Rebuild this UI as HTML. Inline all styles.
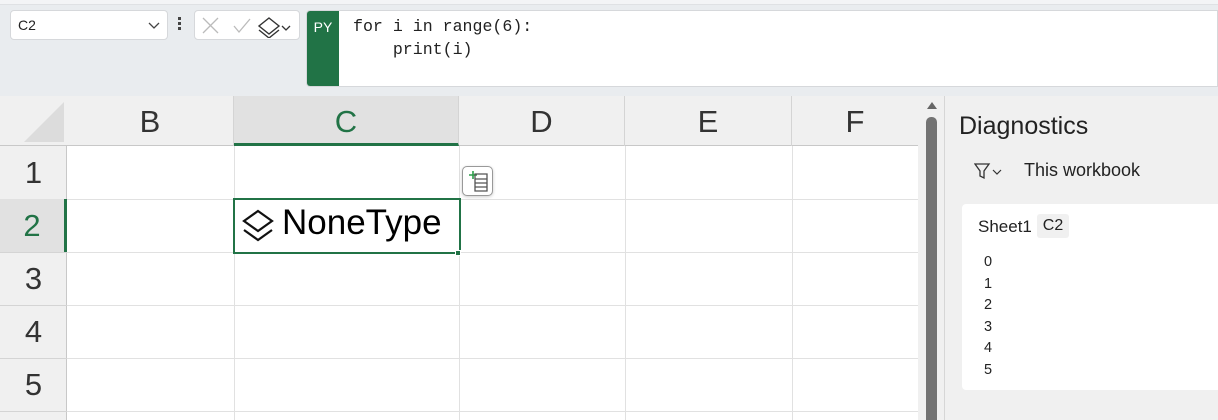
<!DOCTYPE html><html><head><style>
*{box-sizing:border-box;margin:0;padding:0}
body{width:1218px;height:420px;overflow:hidden;background:#e9ecef;font-family:"Liberation Sans",sans-serif;position:relative}
.a{position:absolute}
.hl{position:absolute;left:0;width:918px;height:1px;background:#e1e1e1}
.vl{position:absolute;top:146px;height:274px;width:1px;background:#e1e1e1}
.ch{position:absolute;top:96px;height:50px;font-size:31px;color:#333;text-align:center;line-height:52px;border-right:1px solid #d4d4d4}
.rh{position:absolute;left:0;width:67px;font-size:31px;color:#333;text-align:center;line-height:53px;height:53px}
</style></head><body>
<div class="a" style="left:0;top:0;width:1218px;height:5px;background:#f3f4f6;border-bottom:1px solid #dfe1e4"></div>
<div class="a" style="left:10px;top:10px;width:158px;height:30px;background:#fff;border:1px solid #d6d8db;border-radius:4px;font-size:14px;line-height:28px;padding-left:7px;color:#222">C2
<svg class="a" style="left:137px;top:11px" width="12" height="8"><path d="M1 1l5 5 5-5" stroke="#444" fill="none" stroke-width="1.3"/></svg></div>
<div class="a" style="left:178px;top:17px;width:3px;height:3px;background:#444;box-shadow:0 5px #444,0 10px #444"></div>
<div class="a" style="left:194px;top:10px;width:106px;height:30px;background:#fff;border:1px solid #d6d8db;border-radius:4px">
<svg class="a" style="left:6px;top:5px" width="100" height="22"><path d="M2 2l15 15M17 2L2 17" stroke="#bbb" fill="none" stroke-width="1.3"/><path d="M33 10l5 6 11-13" stroke="#bbb" fill="none" stroke-width="1.3"/><path d="M68 2l10 8-10 8-10-8z" stroke="#333" fill="none" stroke-width="1.4"/><path d="M58 14l10 8 10-8" stroke="#333" fill="none" stroke-width="1.4"/><path d="M81 10l4 4 4-4" stroke="#333" fill="none" stroke-width="1.3"/></svg></div>
<div class="a" style="left:306px;top:10px;width:912px;height:77px;background:#fff;border:1px solid #d6d8db;border-radius:4px 0 0 4px;overflow:hidden">
<div class="a" style="left:0;top:0;width:32px;height:77px;background:#217346;color:#fff;font-size:14px;text-align:center;line-height:32px">PY</div>
<pre class="a" style="left:46px;top:4px;font-family:'Liberation Mono',monospace;font-size:16.6px;line-height:23px;color:#222">for i in range(6):
    print(i)</pre></div>
<div class="a" style="left:0;top:96px;width:918px;height:324px;background:#fff"></div>
<div class="a" style="left:0;top:96px;width:918px;height:50px;background:#f0f0f0;border-bottom:1px solid #c8c8c8"></div>
<div class="a" style="left:0;top:146px;width:67px;height:274px;background:#f0f0f0;border-right:1px solid #c8c8c8"></div>
<svg class="a" style="left:20px;top:100px" width="46" height="44"><path d="M44 2V42H4z" fill="#dcdcdc"/></svg>
<div class="ch" style="left:67px;width:167px">B</div>
<div class="ch" style="left:234px;width:225px;background:#e1e1e1;color:#217346;border-bottom:3px solid #217346;height:50px">C</div>
<div class="ch" style="left:459px;width:166px">D</div>
<div class="ch" style="left:625px;width:167px">E</div>
<div class="ch" style="left:792px;width:126px;border:none">F</div>
<div class="hl" style="top:199px;left:67px;width:851px"></div><div class="hl" style="top:252px;left:67px;width:851px"></div><div class="hl" style="top:305px;left:67px;width:851px"></div><div class="hl" style="top:358px;left:67px;width:851px"></div><div class="hl" style="top:411px;left:67px;width:851px"></div>
<div class="hl" style="top:199px;width:67px;background:#d4d4d4"></div><div class="hl" style="top:252px;width:67px;background:#d4d4d4"></div><div class="hl" style="top:305px;width:67px;background:#d4d4d4"></div><div class="hl" style="top:358px;width:67px;background:#d4d4d4"></div><div class="hl" style="top:411px;width:67px;background:#d4d4d4"></div>
<div class="vl" style="left:234px"></div><div class="vl" style="left:459px"></div><div class="vl" style="left:625px"></div><div class="vl" style="left:792px"></div>
<div class="rh" style="top:146px">1</div>
<div class="rh" style="top:199px;background:#e1e1e1;color:#217346;border-right:3px solid #217346">2</div>
<div class="rh" style="top:252px">3</div><div class="rh" style="top:305px">4</div><div class="rh" style="top:358px">5</div>
<div class="a" style="left:233px;top:198px;width:228px;height:56px;border:2px solid #217346"></div>
<div class="a" style="left:455px;top:250px;width:6px;height:6px;background:#217346;border:1px solid #fff"></div>
<svg class="a" style="left:242px;top:209px" width="34" height="34"><path d="M16 2l14 10-14 10L2 12z" stroke="#111" fill="none" stroke-width="2.2"/><path d="M2 21l14 10 14-10" stroke="#111" fill="none" stroke-width="2.2"/></svg>
<div class="a" style="left:282px;top:203px;font-size:35px;color:#000;font-family:'Liberation Sans','DejaVu Sans',sans-serif">NoneType</div>
<div class="a" style="left:462px;top:166px;width:31px;height:30px;background:#fff;border:1px solid #999;border-radius:5px;box-shadow:0 1px 3px rgba(0,0,0,.2)">
<svg class="a" style="left:5px;top:3px" width="22" height="22"><path d="M1 5h8M5 1v8" stroke="#2e9e4b" stroke-width="1.6"/><path d="M7 4h12v17H7zM7 9h12M7 13h12M7 17h12" stroke="#555" fill="none" stroke-width="1.3"/></svg></div>
<div class="a" style="left:918px;top:96px;width:27px;height:324px;background:#f0f0f0;border-right:1px solid #d6d6d6"></div>
<svg class="a" style="left:926px;top:100px" width="12" height="10"><path d="M1 9l5-7 5 7z" fill="#666"/></svg>
<div class="a" style="left:926px;top:117px;width:11px;height:303px;background:#737373;border-radius:5px 5px 0 0"></div>
<div class="a" style="left:945px;top:96px;width:273px;height:324px;background:#f0f0f0"></div>
<div class="a" style="left:959px;top:112px;font-size:25px;color:#222;font-family:'Liberation Sans','DejaVu Sans',sans-serif">Diagnostics</div>
<svg class="a" style="left:974px;top:162px" width="30" height="18"><path d="M1 2h14l-5 7v7l-4-2v-5z" stroke="#333" fill="none" stroke-width="1.3"/><path d="M19 8l4 4 4-4" stroke="#333" fill="none" stroke-width="1.2"/></svg>
<div class="a" style="left:1024px;top:160px;font-size:18px;color:#222">This workbook</div>
<div class="a" style="left:962px;top:204px;width:256px;height:186px;background:#fff;border-radius:4px 0 0 4px"></div>
<div class="a" style="left:978px;top:217px;font-size:17px;color:#222">Sheet1</div>
<div class="a" style="left:1037px;top:214px;width:32px;height:24px;background:#f0f0f0;border-radius:3px;font-size:16px;line-height:24px;text-align:center;color:#222">C2</div>
<div class="a" style="left:984px;top:252px;font-size:14.5px;line-height:21.6px;color:#222">0<br>1<br>2<br>3<br>4<br>5</div>
</body></html>
